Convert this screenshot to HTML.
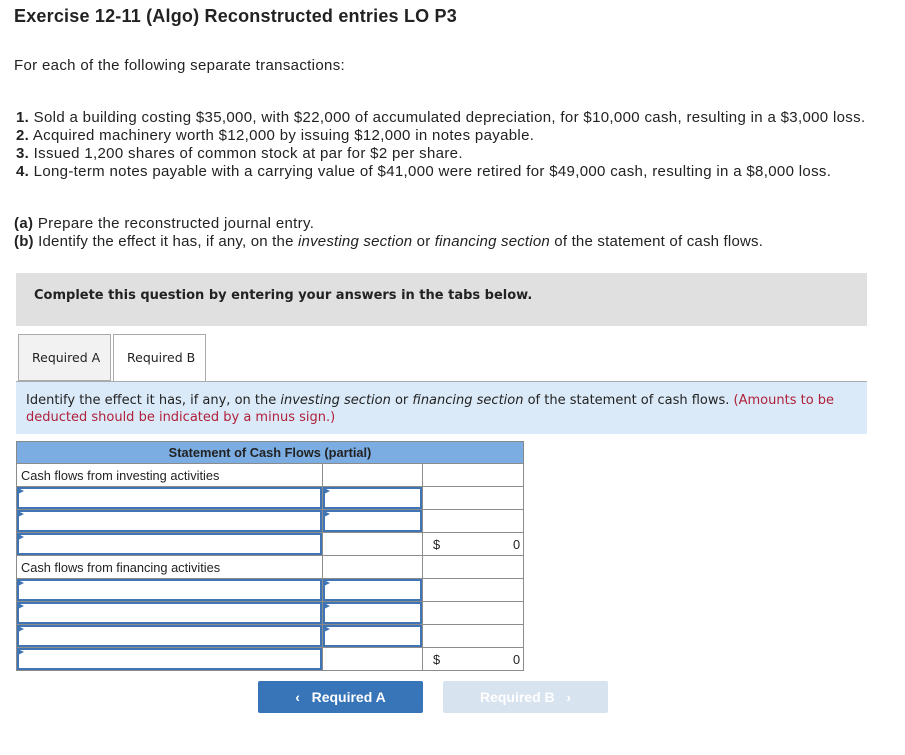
<!DOCTYPE html>
<html><head><meta charset="utf-8"><style>
body{margin:0;width:905px;height:755px;background:#fff;font-family:"Liberation Sans",sans-serif;color:#222;position:relative;overflow:hidden}
.a{position:absolute;white-space:nowrap}
.t{font-size:15px;letter-spacing:0.33px}
.v{font-family:"DejaVu Sans",sans-serif}
.c{position:absolute;box-sizing:border-box;border:1px solid #8c8c8c;background:#fff}
.in{position:absolute;box-sizing:border-box;border:2px solid #3f75b5;background:#fff}
.in:before{content:"";position:absolute;left:-1px;top:-1px;border-left:6px solid #3f75b5;border-top:3px solid transparent;border-bottom:3px solid transparent}
.lbl{font-size:12.8px;position:absolute;left:4px;top:4px}
</style></head><body>
<div class="a" style="left:14px;top:6px;font-size:18px;font-weight:bold;letter-spacing:0.2px">Exercise 12-11 (Algo) Reconstructed entries LO P3</div>
<div class="a t" style="left:14px;top:57px">For each of the following separate transactions:</div>
<div class="a t" style="left:16px;top:109px"><b>1.</b> Sold a building costing $35,000, with $22,000 of accumulated depreciation, for $10,000 cash, resulting in a $3,000 loss.</div>
<div class="a t" style="left:16px;top:127px"><b>2.</b> Acquired machinery worth $12,000 by issuing $12,000 in notes payable.</div>
<div class="a t" style="left:16px;top:145px"><b>3.</b> Issued 1,200 shares of common stock at par for $2 per share.</div>
<div class="a t" style="left:16px;top:163px"><b>4.</b> Long-term notes payable with a carrying value of $41,000 were retired for $49,000 cash, resulting in a $8,000 loss.</div>
<div class="a t" style="left:14px;top:215px"><b>(a)</b> Prepare the reconstructed journal entry.</div>
<div class="a t" style="left:14px;top:233px;letter-spacing:0.2px"><b>(b)</b> Identify the effect it has, if any, on the <i>investing section</i> or <i>financing section</i> of the statement of cash flows.</div>
<div class="a" style="left:16px;top:273px;width:851px;height:53px;background:#e0e0e0"></div>
<div class="a v" style="left:34px;top:288px;font-size:13px;font-weight:bold">Complete this question by entering your answers in the tabs below.</div>
<div class="a" style="left:18px;top:334px;width:93px;height:47px;background:#f2f2f2;border:1px solid #aaa;box-sizing:border-box"></div>
<div class="a v" style="left:32px;top:350px;font-size:12.5px">Required A</div>
<div class="a" style="left:113px;top:334px;width:93px;height:48px;background:#fff;border:1px solid #aaa;border-bottom:none;box-sizing:border-box"></div>
<div class="a v" style="left:127px;top:350px;font-size:12.5px">Required B</div>
<div class="a" style="left:16px;top:381px;width:851px;height:1px;background:#aaa"></div>
<div class="a" style="left:16px;top:382px;width:851px;height:52px;background:#dbeaf8"></div>
<div class="a v" style="left:26px;top:392px;font-size:13px;line-height:17px;white-space:normal;width:830px">Identify the effect it has, if any, on the <i>investing section</i> or <i>financing section</i> of the statement of cash flows. <span style="color:#b0213a">(Amounts to be deducted should be indicated by a minus sign.)</span></div>

<div class="c" style="left:16px;top:441px;width:508px;height:23px;background:#7bade3;border-color:#888"></div>
<div class="a" style="left:16px;top:445px;width:508px;text-align:center;font-size:12.8px;font-weight:bold">Statement of Cash Flows (partial)</div>

<div class="c" style="left:16px;top:463px;width:307px;height:24px"><span class="lbl">Cash flows from investing activities</span></div>
<div class="c" style="left:322px;top:463px;width:101px;height:24px"></div>
<div class="c" style="left:422px;top:463px;width:102px;height:24px"></div>

<div class="c" style="left:16px;top:486px;width:307px;height:24px"></div><div class="in" style="left:17px;top:487px;width:305px;height:22px"></div>
<div class="c" style="left:322px;top:486px;width:101px;height:24px"></div><div class="in" style="left:323px;top:487px;width:99px;height:22px"></div>
<div class="c" style="left:422px;top:486px;width:102px;height:24px"></div>

<div class="c" style="left:16px;top:509px;width:307px;height:24px"></div><div class="in" style="left:17px;top:510px;width:305px;height:22px"></div>
<div class="c" style="left:322px;top:509px;width:101px;height:24px"></div><div class="in" style="left:323px;top:510px;width:99px;height:22px"></div>
<div class="c" style="left:422px;top:509px;width:102px;height:24px"></div>

<div class="c" style="left:16px;top:532px;width:307px;height:24px"></div><div class="in" style="left:17px;top:533px;width:305px;height:22px"></div>
<div class="c" style="left:322px;top:532px;width:101px;height:24px"></div>
<div class="c" style="left:422px;top:532px;width:102px;height:24px"><span class="lbl" style="left:10px">$</span><span class="lbl" style="left:90px">0</span></div>

<div class="c" style="left:16px;top:555px;width:307px;height:24px"><span class="lbl">Cash flows from financing activities</span></div>
<div class="c" style="left:322px;top:555px;width:101px;height:24px"></div>
<div class="c" style="left:422px;top:555px;width:102px;height:24px"></div>

<div class="c" style="left:16px;top:578px;width:307px;height:24px"></div><div class="in" style="left:17px;top:579px;width:305px;height:22px"></div>
<div class="c" style="left:322px;top:578px;width:101px;height:24px"></div><div class="in" style="left:323px;top:579px;width:99px;height:22px"></div>
<div class="c" style="left:422px;top:578px;width:102px;height:24px"></div>

<div class="c" style="left:16px;top:601px;width:307px;height:24px"></div><div class="in" style="left:17px;top:602px;width:305px;height:22px"></div>
<div class="c" style="left:322px;top:601px;width:101px;height:24px"></div><div class="in" style="left:323px;top:602px;width:99px;height:22px"></div>
<div class="c" style="left:422px;top:601px;width:102px;height:24px"></div>

<div class="c" style="left:16px;top:624px;width:307px;height:24px"></div><div class="in" style="left:17px;top:625px;width:305px;height:22px"></div>
<div class="c" style="left:322px;top:624px;width:101px;height:24px"></div><div class="in" style="left:323px;top:625px;width:99px;height:22px"></div>
<div class="c" style="left:422px;top:624px;width:102px;height:24px"></div>

<div class="c" style="left:16px;top:647px;width:307px;height:24px"></div><div class="in" style="left:17px;top:648px;width:305px;height:22px"></div>
<div class="c" style="left:322px;top:647px;width:101px;height:24px"></div>
<div class="c" style="left:422px;top:647px;width:102px;height:24px"><span class="lbl" style="left:10px">$</span><span class="lbl" style="left:90px">0</span></div>

<div class="a" style="left:258px;top:681px;width:165px;height:32px;background:#3874b8;border-radius:2px;color:#fff;font-weight:bold;font-size:14px;line-height:32px;text-align:center">&lsaquo;&nbsp;&nbsp; Required A</div>
<div class="a" style="left:443px;top:681px;width:165px;height:32px;background:#d8e3f0;border-radius:2px;color:#fff;font-weight:bold;font-size:14px;line-height:32px;text-align:center">Required B &nbsp;&nbsp;&rsaquo;</div>
</body></html>
